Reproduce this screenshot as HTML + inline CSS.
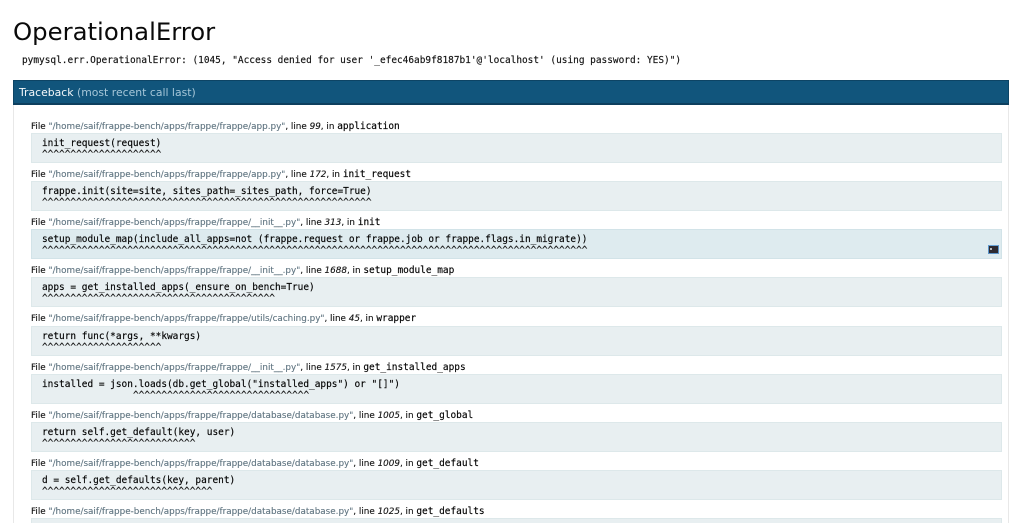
<!DOCTYPE html>
<html><head><meta charset="utf-8"><title>OperationalError</title>
<style>
html,body{margin:0;padding:0;background:#fff;width:1023px;height:523px;overflow:hidden}
body{position:relative;font-family:"DejaVu Sans",sans-serif;color:#000}
div{position:absolute;white-space:pre}
.m{font-family:"DejaVu Sans Mono",monospace;font-size:9.45px;line-height:12px;-webkit-text-stroke:.15px currentColor}
h1{position:absolute;margin:0;left:13px;top:16px;font-size:24.35px;line-height:32px;font-weight:400;color:#0a0a0a}
.hdr{left:13px;top:80px;width:996px;height:25px;background:#11557c;box-sizing:border-box;border:1px solid #0d4465;border-bottom:2px solid #0d3f5e}
.hdr span{position:absolute;left:5px;top:4px;font-size:10.85px;line-height:15px;color:#f4f8fa}
.hdr i{font-style:normal;color:#a5c6d8}
.side{left:13px;top:105px;width:996px;height:418px;box-sizing:border-box;border-left:1px solid #e8e8e8;border-right:1px solid #e8e8e8}
.f{left:31px;font-size:8.8px;line-height:12px;color:#111;-webkit-text-stroke:.12px currentColor}
.f b{font-weight:400;color:#5f7480}
.f em{font-style:italic}
.f .m{position:static;color:#000;font-size:9.45px}
.box{left:31px;width:971px;height:30px;background:#e8eff1;box-sizing:border-box;border:1px solid #dde8ea}
.box.h{background:#deebef;border-color:#d2e3e8}
.c{left:42px;color:#000}
.t{left:42px;color:#111;font-size:9.45px;line-height:9px}
.ic{left:988px;top:245px;width:11px;height:9px;background:#2e2a30;border:1px solid #5b94c8;border-top:1px solid #6aa3d6;box-sizing:border-box}
.ic:after{content:"";position:absolute;left:1px;top:2px;width:2px;height:2px;background:#bbb}
</style></head><body>
<h1>OperationalError</h1>
<div class="m" style="left:22px;top:55px;color:#111">pymysql.err.OperationalError: (1045, "Access denied for user '_efec46ab9f8187b1'@'localhost' (using password: YES)")</div>
<div class="hdr"><span>Traceback <i>(most recent call last)</i></span></div>
<div class="side"></div>

<div class="f" style="top:121px">File <b>"/home/saif/frappe-bench/apps/frappe/frappe/app.py"</b>, line <em>99</em>, in <span class="m">application</span></div>
<div class="box" style="top:133px"></div>
<div class="m c" style="top:138px">init_request(request)</div>
<div class="m t" style="top:150px">^^^^^^^^^^^^^^^^^^^^^</div>

<div class="f" style="top:169px">File <b>"/home/saif/frappe-bench/apps/frappe/frappe/app.py"</b>, line <em>172</em>, in <span class="m">init_request</span></div>
<div class="box" style="top:181px"></div>
<div class="m c" style="top:186px">frappe.init(site=site, sites_path=_sites_path, force=True)</div>
<div class="m t" style="top:198px">^^^^^^^^^^^^^^^^^^^^^^^^^^^^^^^^^^^^^^^^^^^^^^^^^^^^^^^^^^</div>

<div class="f" style="top:217px">File <b>"/home/saif/frappe-bench/apps/frappe/frappe/__init__.py"</b>, line <em>313</em>, in <span class="m">init</span></div>
<div class="box h" style="top:229px;height:30px"></div>
<div class="m c" style="top:234px">setup_module_map(include_all_apps=not (frappe.request or frappe.job or frappe.flags.in_migrate))</div>
<div class="m t" style="top:246px">^^^^^^^^^^^^^^^^^^^^^^^^^^^^^^^^^^^^^^^^^^^^^^^^^^^^^^^^^^^^^^^^^^^^^^^^^^^^^^^^^^^^^^^^^^^^^^^^</div>
<div class="ic"></div>

<div class="f" style="top:265px">File <b>"/home/saif/frappe-bench/apps/frappe/frappe/__init__.py"</b>, line <em>1688</em>, in <span class="m">setup_module_map</span></div>
<div class="box" style="top:277px"></div>
<div class="m c" style="top:282px">apps = get_installed_apps(_ensure_on_bench=True)</div>
<div class="m t" style="top:294px">^^^^^^^^^^^^^^^^^^^^^^^^^^^^^^^^^^^^^^^^^</div>

<div class="f" style="top:313px">File <b>"/home/saif/frappe-bench/apps/frappe/frappe/utils/caching.py"</b>, line <em>45</em>, in <span class="m">wrapper</span></div>
<div class="box" style="top:326px"></div>
<div class="m c" style="top:331px">return func(*args, **kwargs)</div>
<div class="m t" style="top:343px">^^^^^^^^^^^^^^^^^^^^^</div>

<div class="f" style="top:362px">File <b>"/home/saif/frappe-bench/apps/frappe/frappe/__init__.py"</b>, line <em>1575</em>, in <span class="m">get_installed_apps</span></div>
<div class="box" style="top:374px"></div>
<div class="m c" style="top:379px">installed = json.loads(db.get_global("installed_apps") or "[]")</div>
<div class="m t" style="top:391px;left:133px">^^^^^^^^^^^^^^^^^^^^^^^^^^^^^^^</div>

<div class="f" style="top:410px">File <b>"/home/saif/frappe-bench/apps/frappe/frappe/database/database.py"</b>, line <em>1005</em>, in <span class="m">get_global</span></div>
<div class="box" style="top:422px"></div>
<div class="m c" style="top:427px">return self.get_default(key, user)</div>
<div class="m t" style="top:439px">^^^^^^^^^^^^^^^^^^^^^^^^^^^</div>

<div class="f" style="top:458px">File <b>"/home/saif/frappe-bench/apps/frappe/frappe/database/database.py"</b>, line <em>1009</em>, in <span class="m">get_default</span></div>
<div class="box" style="top:470px"></div>
<div class="m c" style="top:475px">d = self.get_defaults(key, parent)</div>
<div class="m t" style="top:487px">^^^^^^^^^^^^^^^^^^^^^^^^^^^^^^</div>

<div class="f" style="top:506px">File <b>"/home/saif/frappe-bench/apps/frappe/frappe/database/database.py"</b>, line <em>1025</em>, in <span class="m">get_defaults</span></div>
<div class="box" style="top:518px"></div>
</body></html>
